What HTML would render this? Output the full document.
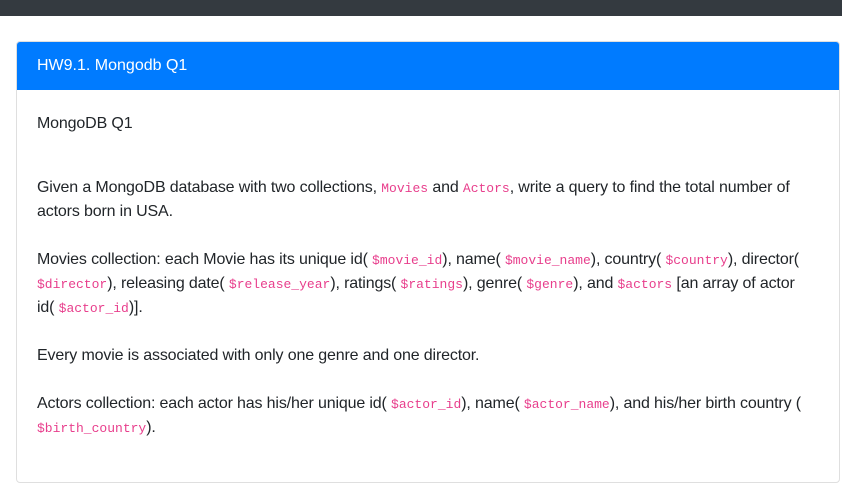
<!DOCTYPE html>
<html><head><style>
html,body{margin:0;width:842px;height:455px;overflow:hidden;background:#fff;font-family:"Liberation Sans",sans-serif;color:#212529}
.top{height:16px;background:#343a40}
.card{position:absolute;left:16px;top:41px;width:822px;height:440px;border:1px solid #dfdfdf;border-radius:4px;overflow:hidden}
.hd{height:48px;background:#007bff;color:#fff;font-size:16px;line-height:48px;padding-left:20px}
.ln{position:absolute;left:20px;font-size:16px;white-space:nowrap;line-height:24px;letter-spacing:-0.15px}
code{font-family:"Liberation Mono",monospace;font-size:13px;color:#e83e8c;letter-spacing:0}
</style></head><body>
<div class="top"></div>
<div class="card">
<div class="hd">HW9.1. Mongodb Q1</div>
<div class="ln" style="top:70px">MongoDB Q1</div>
<div class="ln" style="top:134px">Given a MongoDB database with two collections, <code>Movies</code> and <code>Actors</code>, write a query to find the total number of</div>
<div class="ln" style="top:158px">actors born in USA.</div>
<div class="ln" style="top:206px">Movies collection: each Movie has its unique id( <code>$movie_id</code>), name( <code>$movie_name</code>), country( <code>$country</code>), director(</div>
<div class="ln" style="top:230px"><code>$director</code>), releasing date( <code>$release_year</code>), ratings( <code>$ratings</code>), genre( <code>$genre</code>), and <code>$actors</code> [an array of actor</div>
<div class="ln" style="top:254px">id( <code>$actor_id</code>)].</div>
<div class="ln" style="top:302px">Every movie is associated with only one genre and one director.</div>
<div class="ln" style="top:350px">Actors collection: each actor has his/her unique id( <code>$actor_id</code>), name( <code>$actor_name</code>), and his/her birth country (</div>
<div class="ln" style="top:374px"><code>$birth_country</code>).</div>
</div>
</body></html>
